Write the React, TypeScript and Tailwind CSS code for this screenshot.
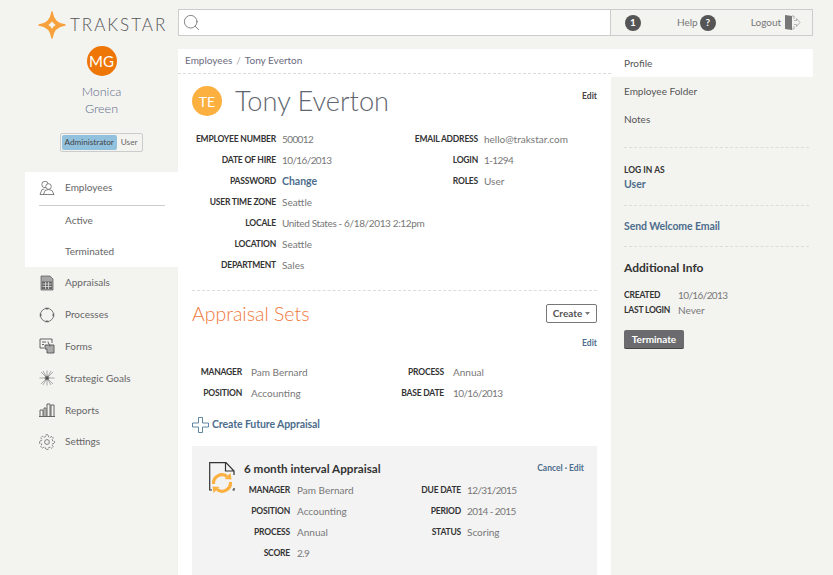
import { Search } from "lucide-react";

const font = { fontFamily: '"Lato", "Noto Sans", sans-serif' };

function Logo() {
  return (
    <svg width="28" height="28" viewBox="0 0 28 28">
      <path d="M14 1 C15 9 19 13 27 14 C19 15 15 19 14 27 C13 19 9 15 1 14 C9 13 13 9 14 1 Z M14 8.5 C13 11 11 13 8.5 14 C11 15 13 17 14 19.5 C15 17 17 15 19.5 14 C17 13 15 11 14 8.5 Z" fill="#f7a13c" fillRule="evenodd" stroke="#f7a13c" strokeWidth="1.5" strokeLinejoin="round" />
    </svg>
  );
}

function EmployeesIcon() {
  return (
    <svg width="16" height="16" viewBox="0 0 16 16" fill="none" stroke="#666" strokeWidth="0.8">
      <circle cx="6" cy="4.5" r="3.2" />
      <circle cx="9.5" cy="6.5" r="2.8" fill="#fff" />
      <path d="M1 14.5 L3 9.5 L5.5 9 M4.5 14.5 L6 10.5 L9.5 9.5 L13 10.5 L15 14.5 Z M1 14.5 H5" />
    </svg>
  );
}

function AppraisalsIcon() {
  return (
    <svg width="16" height="16" viewBox="0 0 16 16">
      <path d="M2 1 H11 L14 4 V15 H2 Z" fill="#a5a5a5" stroke="#555" strokeWidth="0.7" />
      <path d="M3 6.5 H13 V14 H3 Z" fill="#666" />
      <path d="M3.5 9 H12.5 M3.5 11.5 H12.5 M6.5 7 V14 M9.5 7 V14" stroke="#ddd" strokeWidth="0.8" />
    </svg>
  );
}

function ProcessesIcon() {
  return (
    <svg width="16" height="16" viewBox="0 0 16 16" fill="#666">
      <circle cx="8" cy="8" r="6.6" fill="none" stroke="#555" strokeWidth="0.8" />
      <path d="M6 0.8 H10 L8 3 Z M6 15.2 H10 L8 13 Z M0.8 6 V10 L3 8 Z M15.2 6 V10 L13 8 Z" />
    </svg>
  );
}

function FormsIcon() {
  return (
    <svg width="16" height="16" viewBox="0 0 16 16" fill="none" stroke="#555" strokeWidth="0.9">
      <path d="M1 1 H13 V5 M1 1 V10 H5" />
      <path d="M6 7 H15 V15 H8 V11 H6 Z" fill="#aaa" />
      <path d="M3 4 H7 M3 6.5 H5 M9 3.5 C9 6 11 6 11 8.5" />
    </svg>
  );
}

function GoalsIcon() {
  return (
    <svg width="16" height="16" viewBox="0 0 16 16" stroke="#888" strokeWidth="0.7">
      <path d="M8 0.5 V15.5 M0.5 8 H15.5 M2 2 L14 14 M14 2 L2 14 M4 1 L12 15 M12 1 L4 15" />
      <circle cx="8" cy="8" r="2" fill="#555" />
    </svg>
  );
}

function ReportsIcon() {
  return (
    <svg width="16" height="14" viewBox="0 0 16 14" fill="none" stroke="#555" strokeWidth="0.9">
      <path d="M0 13.5 H16 M1 13 V7 H4 V13 M5 13 V5 H7 V13 M8 13 V1 H11 V13 M12 13 V2 H15 V13" />
    </svg>
  );
}

function SettingsIcon() {
  return (
    <svg width="16" height="16" viewBox="0 0 16 16" fill="none" stroke="#666" strokeWidth="0.8">
      <circle cx="8" cy="8" r="2.4" />
      <path d="M6.8 0.8 H9.2 L9.6 2.8 L11.2 3.4 L12.9 2.3 L14.4 4 L13.2 5.6 L13.8 7 L15.5 7.4 V9.2 L13.7 9.6 L13.1 11.1 L14.2 12.7 L12.6 14.3 L11 13.2 L9.6 13.7 L9.2 15.4 H6.8 L6.4 13.7 L4.9 13.1 L3.3 14.2 L1.7 12.7 L2.8 11.1 L2.2 9.6 L0.5 9.2 V7.2 L2.2 6.8 L2.8 5.4 L1.8 3.8 L3.4 2.2 L5 3.3 L6.4 2.7 Z" strokeDasharray="2.2 0.8" />
    </svg>
  );
}

function DoorIcon() {
  return (
    <svg width="17" height="17" viewBox="0 0 17 17">
      <path d="M1 1 L8 2 V16 L1 15 Z" fill="#777" />
      <path d="M8 2 H10 V5 M8 15 H10 V12 M10 6.5 H12.5 V4.5 L16 8.5 L12.5 12.5 V10.5 H10" fill="none" stroke="#999" strokeWidth="0.7" />
    </svg>
  );
}

function PlusIcon() {
  return (
    <svg width="17" height="16" viewBox="0 0 17 16" fill="none" stroke="#4f7897" strokeWidth="0.9">
      <path d="M6.5 0.5 H10.5 V6 H16.5 V10 H10.5 V15.5 H6.5 V10 H0.5 V6 H6.5 Z" />
    </svg>
  );
}

function FileIcon() {
  return (
    <svg width="26" height="31" viewBox="0 0 26 31" fill="none">
      <path d="M3 28 H0.7 V0.7 H17 L25 9 V13 M16.5 1 V9 H25" stroke="#333" strokeWidth="1.2" />
      <path d="M25 26 V28 H23.5" stroke="#333" strokeWidth="1.2" />
      <path d="M4.5 22 A8.5 8.5 0 0 1 18 14.5" stroke="#fbb040" strokeWidth="3.2" />
      <path d="M21.5 20 A8.5 8.5 0 0 1 8 27.5" stroke="#fbb040" strokeWidth="3.2" />
      <path d="M15.5 17 L22.5 17.5 L21.5 11 Z M10.5 25 L3.5 24.5 L4.5 31 Z" fill="#fbb040" />
    </svg>
  );
}

function Field({ label, value, w, bold, num, tight, gap }: { label: string; value: string; w: string; bold?: boolean; num?: boolean; tight?: boolean; gap?: string }) {
  let cls = "text-[10px] text-[#777] whitespace-nowrap";
  if (bold) cls = "text-[10.5px] font-bold text-[#4d6d8c]";
  if (num) cls = "text-[10px] text-[#777] whitespace-nowrap tracking-[-0.6px]";
  if (tight) cls = "text-[10px] text-[#777] whitespace-nowrap tracking-[-0.36px]";
  return (
    <div className={`flex items-center h-[21px] ${gap ?? "gap-[6px]"}`}>
      <div className={`${w} shrink-0 text-right text-[8.5px] font-bold text-[#333] tracking-[-0.2px] uppercase whitespace-nowrap`}>{label}</div>
      <div className={cls}>{value}</div>
    </div>
  );
}

function NavItem({ icon, label }: { icon: React.ReactNode; label: string }) {
  return (
    <div className="flex items-center h-[31.8px] pl-[39px]">
      <div className="w-[26px] flex justify-start">{icon}</div>
      <span className="text-[10px] text-[#666]">{label}</span>
    </div>
  );
}

const dashed = "border-t border-dashed border-[#dcdcd8]";

export default function App() {
  return (
    <div style={font} className="flex w-[833px] h-[575px] overflow-hidden bg-[#f3f3f0]">
      <aside className="w-[178px] shrink-0">
        <div className="flex items-center h-[49px] pl-[38px] pt-[1px] gap-[4px]">
          <Logo />
          <span className="text-[17px] font-light tracking-[2px] text-[#555]">TRAKSTAR</span>
        </div>
        <div className="flex flex-col items-center pl-[25px] -mt-[3px]">
          <div className="w-[30px] h-[30px] rounded-full bg-[#ee7606] text-white text-[15px] flex items-center justify-center">MG</div>
          <div className="mt-[7px] text-[12.5px] font-light leading-[17px] text-[#5b6b86] text-center">Monica<br />Green</div>
          <div className="mt-[16px] flex items-center h-[19px] border border-[#ccc] rounded-[2px] px-[1px] bg-[#f3f3f0]">
            <span className="bg-[#92c1de] rounded-[2px] px-[3px] h-[15px] leading-[15px] text-[8.2px] text-[#444]">Administrator</span>
            <span className="px-[4px] text-[8.2px] text-[#666]">User</span>
          </div>
        </div>
        <nav className="mt-[20px]">
          <div className="ml-[25px] bg-white h-[95px]">
            <div className="flex items-center h-[33px] pl-[14px] pb-[2px]">
              <div className="w-[26px]"><EmployeesIcon /></div>
              <span className="text-[10px] text-[#666]">Employees</span>
            </div>
            <div className="ml-[14px] mr-[13px] border-t border-[#ccc]" />
            <div className="pl-[40px] h-[31px] pb-[2px] flex items-center text-[10px] text-[#666]">Active</div>
            <div className="pl-[40px] h-[31px] pb-[2px] flex items-center text-[10px] text-[#666]">Terminated</div>
          </div>
          <NavItem icon={<AppraisalsIcon />} label="Appraisals" />
          <NavItem icon={<ProcessesIcon />} label="Processes" />
          <NavItem icon={<FormsIcon />} label="Forms" />
          <NavItem icon={<GoalsIcon />} label="Strategic Goals" />
          <NavItem icon={<ReportsIcon />} label="Reports" />
          <NavItem icon={<SettingsIcon />} label="Settings" />
        </nav>
      </aside>

      <div className="flex-1 min-w-0">
        <header className="flex h-[49px] pt-[9px] pr-[20px]">
          <div className="flex h-[27px] w-[635px] border border-[#ccc] bg-white">
            <div className="w-[431px] flex items-center pl-[3px]">
              <Search size={19} strokeWidth={1} color="#666" />
            </div>
            <div className="flex-1 bg-[#f3f3f0] border-l border-[#ccc] flex items-center text-[10px] text-[#777]">
              <span className="ml-[14px] w-[16px] h-[16px] rounded-full bg-[#555] text-white text-[10px] font-bold flex items-center justify-center">1</span>
              <span className="ml-[36px]">Help</span>
              <span className="ml-[2px] w-[16px] h-[16px] rounded-full bg-[#555] text-white text-[10px] font-bold flex items-center justify-center">?</span>
              <span className="ml-[35px]">Logout</span>
              <span className="ml-[3px]"><DoorIcon /></span>
            </div>
          </div>
        </header>

        <div className="flex">
          <main className="w-[433px] h-[526px] bg-white shrink-0">
            <div className="h-[24px] pl-[7px] pb-[2px] flex items-center text-[10px] text-[#6b6b80]">
              <span>Employees</span>
              <span className="mx-[4px] text-[#aaa]">/</span>
              <span>Tony Everton</span>
            </div>
            <div className={`mx-0 ${dashed}`} />
            <div className="relative flex items-center h-[55px] pl-[14px] pb-[1px]">
              <div className="w-[30px] h-[30px] rounded-full bg-[#fbb040] text-white text-[14px] flex items-center justify-center">TE</div>
              <h1 className="ml-[13px] text-[27.2px] font-light text-[#5f6670]">Tony Everton</h1>
              <span className="absolute right-[14px] top-[16px] text-[8.5px] font-bold text-[#444]">Edit</span>
            </div>
            <div className="flex">
              <div className="w-[236px]">
                <Field w="w-[98px]" label="Employee Number" value="500012" num />
                <Field w="w-[98px]" label="Date of Hire" value="10/16/2013" num />
                <Field w="w-[98px]" label="Password" value="Change" bold />
                <Field w="w-[98px]" label="User Time Zone" value="Seattle" />
                <Field w="w-[98px]" label="Locale" value="United States - 6/18/2013 2:12pm" tight />
                <Field w="w-[98px]" label="Location" value="Seattle" />
                <Field w="w-[98px]" label="Department" value="Sales" />
              </div>
              <div className="flex-1">
                <Field w="w-[64px]" label="Email Address" value="hello@trakstar.com" />
                <Field w="w-[64px]" label="Login" value="1-1294" num />
                <Field w="w-[64px]" label="Roles" value="User" />
              </div>
            </div>
            <div className={`mt-[14px] mx-[14px] ${dashed}`} />
            <div className="flex items-center justify-between h-[45px] pl-[14px] pr-[14px]">
              <h2 className="text-[19.5px] font-light text-[#f0783c]">Appraisal Sets</h2>
              <span className="w-[51px] h-[19px] border border-[#777] rounded-[2px] flex items-center justify-center text-[10px] font-bold text-[#555]">
                Create
                <svg className="ml-[3px]" width="5" height="3" viewBox="0 0 5 3"><path d="M0 0 H5 L2.5 3 Z" fill="#777" /></svg>
              </span>
            </div>
            <div className="mt-[1px] pr-[14px] text-right text-[8.5px] font-bold text-[#4d6d8c]">Edit</div>
            <div className="flex mt-[12px]">
              <div className="w-[158px]">
                <Field w="w-[64px]" gap="gap-[9px]" label="Manager" value="Pam Bernard" />
                <Field w="w-[64px]" gap="gap-[9px]" label="Position" value="Accounting" />
              </div>
              <div className="flex-1">
                <Field w="w-[108px]" gap="gap-[9px]" label="Process" value="Annual" />
                <Field w="w-[108px]" gap="gap-[9px]" label="Base Date" value="10/16/2013" num />
              </div>
            </div>
            <div className="flex items-center mt-[11px] ml-[14px] h-[20px] gap-[3px] text-[10.5px] font-bold tracking-[-0.1px] text-[#4d6d8c]">
              <PlusIcon />
              Create Future Appraisal
            </div>
            <section className="relative mt-[11px] mx-[14px] bg-[#f3f3f3] h-[140px] flex pl-[17px] pt-[16px]">
              <div className="w-[35px] shrink-0"><FileIcon /></div>
              <div className="flex-1">
                <div className="flex items-center justify-between pr-[13px] h-[14px]">
                  <span className="text-[11.7px] font-bold text-[#333]">6 month interval Appraisal</span>
                  <span className="text-[8.5px] font-bold text-[#4d6d8c]">Cancel · Edit</span>
                </div>
                <div className="flex -ml-[52px] mt-[4px]">
                  <div className="w-[213px]">
                    <Field w="w-[98px]" gap="gap-[7px]" label="Manager" value="Pam Bernard" />
                    <Field w="w-[98px]" gap="gap-[7px]" label="Position" value="Accounting" />
                    <Field w="w-[98px]" gap="gap-[7px]" label="Process" value="Annual" />
                    <Field w="w-[98px]" gap="gap-[7px]" label="Score" value="2.9" num />
                  </div>
                  <div className="flex-1">
                    <Field w="w-[56px]" label="Due Date" value="12/31/2015" num />
                    <Field w="w-[56px]" label="Period" value="2014 - 2015" num />
                    <Field w="w-[56px]" label="Status" value="Scoring" />
                  </div>
                </div>
              </div>
            </section>
          </main>

          <div className="w-[222px] text-[10px] text-[#555]">
            <div className="w-[202px] h-[28px] bg-white pl-[13px] pt-[1px] flex items-center">Profile</div>
            <div className="h-[28px] pl-[13px] pt-[1px] flex items-center">Employee Folder</div>
            <div className="h-[28px] pl-[13px] pt-[1px] flex items-center">Notes</div>
            <div className={`mt-[14px] ml-[13px] w-[185px] ${dashed}`} />
            <div className="pl-[13px] mt-[16px] text-[8.5px] font-bold text-[#333]">LOG IN AS</div>
            <div className="pl-[13px] text-[10.5px] font-bold text-[#4d6d8c]">User</div>
            <div className={`mt-[12px] ml-[13px] w-[185px] ${dashed}`} />
            <div className="pl-[13px] mt-[13px] text-[10.5px] font-bold tracking-[-0.1px] text-[#4d6d8c]">Send Welcome Email</div>
            <div className={`mt-[12px] ml-[13px] w-[185px] ${dashed}`} />
            <div className="pl-[13px] mt-[12px] text-[12px] font-bold text-[#333]">Additional Info</div>
            <div className="pl-[13px] mt-[11px] flex items-center h-[15px]">
              <span className="w-[54px] text-[8.5px] font-bold tracking-[-0.2px] text-[#333]">CREATED</span>
              <span className="text-[#777] tracking-[-0.6px]">10/16/2013</span>
            </div>
            <div className="pl-[13px] flex items-center h-[15px]">
              <span className="w-[54px] text-[8.5px] font-bold tracking-[-0.2px] text-[#333]">LAST LOGIN</span>
              <span className="text-[#777]">Never</span>
            </div>
            <div className="ml-[13px] mt-[12px] w-[60px] h-[19px] rounded-[2px] border-b border-[#444] bg-[#6b6b6f] text-white text-[10px] font-bold flex items-center justify-center">Terminate</div>
          </div>
        </div>
      </div>
    </div>
  );
}
